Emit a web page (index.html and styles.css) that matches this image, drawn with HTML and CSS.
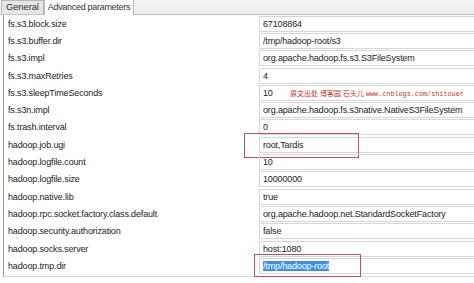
FILE: index.html
```html
<!DOCTYPE html>
<html lang="en">
<head>
    <meta charset="UTF-8">
    <title>Advanced parameters</title>
    <link rel="stylesheet" href="styles.css">
</head>
<body>
    <div class="tabs">
        <span class="tab">General</span>
        <span class="tab active">Advanced parameters</span>
    </div>
    <div class="panel">
        <div class="row"><span class="key">fs.s3.block.size</span><span class="val">67108864</span></div>
        <div class="row"><span class="key">fs.s3.buffer.dir</span><span class="val">/tmp/hadoop-root/s3</span></div>
        <div class="row"><span class="key">fs.s3.impl</span><span class="val">org.apache.hadoop.fs.s3.S3FileSystem</span></div>
        <div class="row"><span class="key">fs.s3.maxRetries</span><span class="val">4</span></div>
        <div class="row"><span class="key">fs.s3.sleepTimeSeconds</span><span class="val">10 <em class="mark">原文出处 博客园 石头儿 <tt>www.cnblogs.com/shitouer</tt></em></span></div>
        <div class="row"><span class="key">fs.s3n.impl</span><span class="val">org.apache.hadoop.fs.s3native.NativeS3FileSystem</span></div>
        <div class="row"><span class="key">fs.trash.interval</span><span class="val">0</span></div>
        <div class="row"><span class="key">hadoop.job.ugi</span><span class="val">root,Tardis</span><i class="box box1"></i></div>
        <div class="row"><span class="key">hadoop.logfile.count</span><span class="val">10</span></div>
        <div class="row"><span class="key">hadoop.logfile.size</span><span class="val">10000000</span></div>
        <div class="row"><span class="key">hadoop.native.lib</span><span class="val">true</span></div>
        <div class="row"><span class="key">hadoop.rpc.socket.factory.class.default</span><span class="val">org.apache.hadoop.net.StandardSocketFactory</span></div>
        <div class="row"><span class="key">hadoop.security.authorization</span><span class="val">false</span></div>
        <div class="row"><span class="key">hadoop.socks.server</span><span class="val">host:1080</span></div>
        <div class="row"><span class="key">hadoop.tmp.dir</span><span class="val"><b class="sel">/tmp/hadoop-root</b></span><i class="box box2"></i></div>
    </div>
</body>
</html>
```

FILE: styles.css
```css
* {
    padding: 0;
    margin: 0;
    box-sizing: border-box;
}
body {
    width: 474px;
    height: 283px;
    background: #fff;
    font-family: "Liberation Sans", "Noto Sans CJK SC", sans-serif;
    font-size: 9px;
    letter-spacing: -0.15px;
    color: #222;
    overflow: hidden;
}
.tabs {
    height: 15px;
    display: flex;
    align-items: flex-end;
    background: linear-gradient(#f6f6f6, #ececec);
    border-bottom: 1px solid #c4c4c4;
    padding-left: 1px;
}
.tab {
    height: 14px;
    line-height: 12px;
    padding: 0 4px;
    border: 1px solid #b8b8b8;
    border-bottom: none;
    background: #e6e6e6;
    color: #333;
    font-size: 9.5px;
}
.tab.active {
    height: 16px;
    line-height: 14px;
    margin-bottom: -1px;
    background: #fff;
    padding: 0 3px;
    font-size: 9px;
    letter-spacing: -0.3px;
}
.panel {
    margin-left: 3px;
    height: 262px;
    border-left: 1px solid #9a9a9a;
    border-bottom: 1px solid #d4d4d4;
    display: grid;
    grid-auto-rows: 17.3px;
}
.row {
    position: relative;
    display: grid;
    grid-template-columns: 255px 1fr;
    align-items: center;
}
.key {
    padding-left: 4px;
    white-space: nowrap;
}
.val {
    height: 16px;
    line-height: 14px;
    border: 1px solid #d6d6d6;
    border-right: none;
    padding-left: 3px;
    white-space: nowrap;
    overflow: hidden;
}
.mark {
    font-style: normal;
    color: #c8302c;
    margin-left: 15px;
    font-size: 7px;
    letter-spacing: 0;
}
.mark tt {
    font-family: "Liberation Mono", monospace;
    font-size: 6.8px;
}
.sel {
    font-weight: normal;
    background: #3c8fe8;
    color: #fff;
}
.box {
    position: absolute;
    border: 1px solid #c05060;
}
.box1 {
    left: 240px;
    top: -3px;
    width: 115px;
    height: 25px;
}
.box2 {
    left: 250px;
    top: -3px;
    width: 107px;
    height: 23px;
}
```
